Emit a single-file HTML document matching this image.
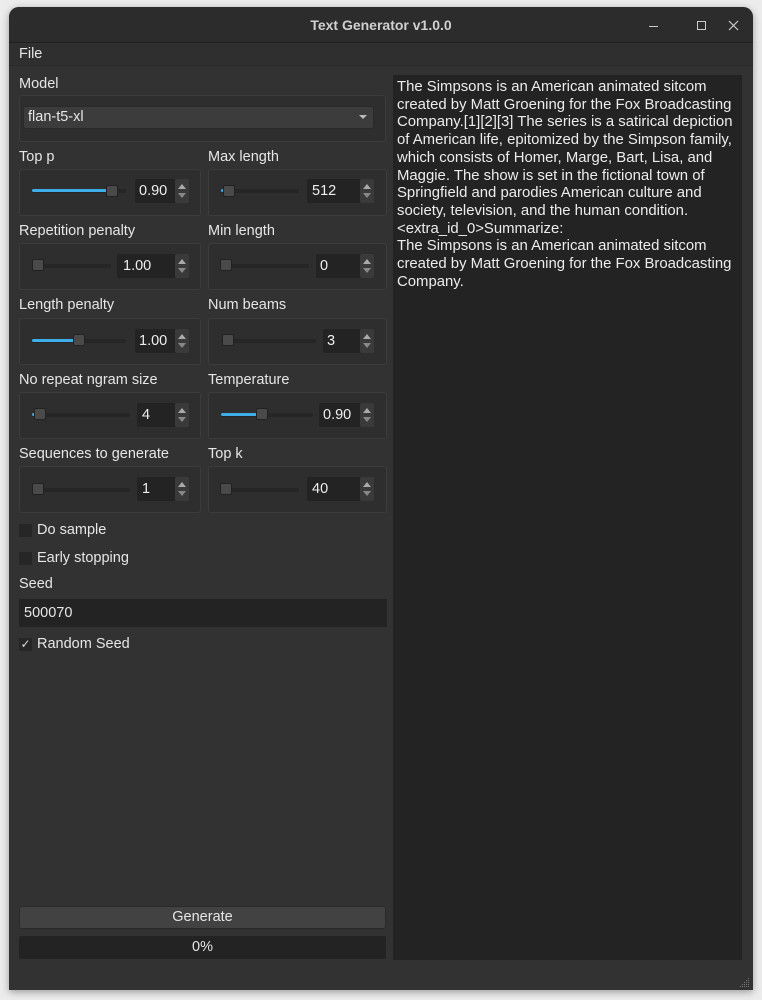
<!DOCTYPE html>
<html><head><meta charset="utf-8"><style>
*{box-sizing:border-box;margin:0;padding:0}
body{width:762px;height:1000px;background:#ececec;font-family:"Liberation Sans",sans-serif;font-size:14px;color:#e6e6e6;position:relative;overflow:hidden}
.win{position:absolute;left:9px;top:7px;width:744px;height:983px;background:#323232;border-radius:10px 10px 0 0;box-shadow:0 2px 8px rgba(0,0,0,.35);overflow:hidden}
.title{position:absolute;left:0;top:0;width:744px;height:36px;background:#2c2c2c;border-bottom:1px solid #1e1e1e;text-align:center;line-height:37px;font-weight:bold;color:#d0d0d0;font-size:14px}
.menu{position:absolute;left:0;top:37px;width:744px;height:22px;background:#2f2f2f;border-bottom:1px solid #2a2a2a}
.a{position:absolute}
.lbl{position:absolute;font-size:14.5px;color:#e6e6e6;white-space:nowrap}
.grp{position:absolute;border:1px solid #3c3c3c;border-radius:3px;background:#2e2e2e;height:47px}
.tr{position:absolute;height:4px;background:#262626;border-radius:2px}
.fill{position:absolute;height:3px;background:#3daee9;border-radius:2px}
.h{position:absolute;width:12px;height:12px;background:#4a4a4a;border:1px solid #222;border-radius:2px}
.spin{position:absolute;height:24px;background:#232323;border-radius:2px;line-height:24px;font-size:14.5px;color:#eee}
.spin .ar{position:absolute;right:0;top:0;width:14px;height:24px;background:#3a3a3a;border-radius:2px}
.spin .ar:before{content:"";position:absolute;left:3px;top:5px;border:4px solid transparent;border-bottom:5px solid #aaa;border-top:0}
.spin .ar:after{content:"";position:absolute;left:3px;top:14px;border:4px solid transparent;border-top:5px solid #888;border-bottom:0}
.cb{position:absolute;width:13px;height:13px;background:#262626}
.txt{position:absolute;left:384px;top:68px;width:349px;height:885px;background:#232323;padding:4px 4px;font-size:14.9px;line-height:17.7px;white-space:nowrap;color:#ececec;overflow:hidden}
</style></head><body>
<div class="win">
<div class="title">Text Generator v1.0.0</div>
<div class="a" style="left:640px;top:19px;width:9px;height:1px;background:#ccc"></div>
<div class="a" style="left:688px;top:14px;width:9px;height:9px;border:1.5px solid #ccc"></div>
<svg class="a" style="left:719px;top:13px" width="11" height="11"><path d="M1 1L10 10M10 1L1 10" stroke="#ccc" stroke-width="1.2"/></svg>
<div class="menu"></div>
<div class="lbl" style="left:10px;top:39px">File</div>

<div class="lbl" style="left:10px;top:69px">Model</div>
<div class="grp" style="left:10px;top:88px;width:367px;height:47px"></div>
<div class="a" style="left:14px;top:99px;width:351px;height:23px;background:#3c3c3c;border:1px solid #2a2a2a;border-radius:3px;line-height:21px;padding-left:4px;font-size:14.5px">flan-t5-xl</div>
<div class="a" style="left:350px;top:108px;border:4px solid transparent;border-top:4px solid #bbb"></div>
<div class="txt">The Simpsons is an American animated sitcom<br>created by Matt Groening for the Fox Broadcasting<br>Company.[1][2][3] The series is a satirical depiction<br>of American life, epitomized by the Simpson family,<br>which consists of Homer, Marge, Bart, Lisa, and<br>Maggie. The show is set in the fictional town of<br>Springfield and parodies American culture and<br>society, television, and the human condition.<br>&lt;extra_id_0&gt;Summarize:<br>The Simpsons is an American animated sitcom<br>created by Matt Groening for the Fox Broadcasting<br>Company.</div>
<svg class="a" style="left:731px;top:971px" width="10" height="10" fill="#777"><rect x="8" y="0" width="1" height="1"/><rect x="6" y="2" width="1" height="1"/><rect x="8" y="2" width="1" height="1"/><rect x="4" y="4" width="1" height="1"/><rect x="6" y="4" width="1" height="1"/><rect x="8" y="4" width="1" height="1"/><rect x="2" y="6" width="1" height="1"/><rect x="4" y="6" width="1" height="1"/><rect x="6" y="6" width="1" height="1"/><rect x="8" y="6" width="1" height="1"/><rect x="0" y="8" width="1" height="1"/><rect x="2" y="8" width="1" height="1"/><rect x="4" y="8" width="1" height="1"/><rect x="6" y="8" width="1" height="1"/><rect x="8" y="8" width="1" height="1"/></svg>
</div>

<div style="position:absolute;left:0;top:0">
<div class="lbl" style="left:19px;top:149px">Top p</div><div class="lbl" style="left:208px;top:149px">Max length</div>
<div class="grp" style="left:19px;top:169px;width:182px"></div><div class="grp" style="left:208px;top:169px;width:179px"></div>
<div class="tr" style="left:32px;top:189px;width:94px"></div><div class="fill" style="left:32px;top:189px;width:80px"></div><div class="h" style="left:106px;top:185px"></div>
<div class="spin" style="left:135px;top:179px;width:54px;padding-left:4px">0.90<div class="ar"></div></div>
<div class="tr" style="left:221px;top:189px;width:78px"></div><div class="fill" style="left:221px;top:189px;width:6px"></div><div class="h" style="left:223px;top:185px"></div>
<div class="spin" style="left:307px;top:179px;width:67px;padding-left:5px">512<div class="ar"></div></div>

<div class="lbl" style="left:19px;top:223px">Repetition penalty</div><div class="lbl" style="left:208px;top:223px">Min length</div>
<div class="grp" style="left:19px;top:243px;width:182px"></div><div class="grp" style="left:208px;top:243px;width:179px"></div>
<div class="tr" style="left:32px;top:264px;width:79px"></div><div class="h" style="left:32px;top:259px"></div>
<div class="spin" style="left:117px;top:254px;width:72px;padding-left:6px">1.00<div class="ar"></div></div>
<div class="tr" style="left:221px;top:264px;width:88px"></div><div class="h" style="left:220px;top:259px"></div>
<div class="spin" style="left:316px;top:254px;width:58px;padding-left:4px">0<div class="ar"></div></div>

<div class="lbl" style="left:19px;top:297px">Length penalty</div><div class="lbl" style="left:208px;top:297px">Num beams</div>
<div class="grp" style="left:19px;top:318px;width:182px"></div><div class="grp" style="left:208px;top:318px;width:179px"></div>
<div class="tr" style="left:32px;top:339px;width:94px"></div><div class="fill" style="left:32px;top:339px;width:47px"></div><div class="h" style="left:73px;top:334px"></div>
<div class="spin" style="left:135px;top:329px;width:54px;padding-left:4px">1.00<div class="ar"></div></div>
<div class="tr" style="left:221px;top:339px;width:95px"></div><div class="h" style="left:222px;top:334px"></div>
<div class="spin" style="left:323px;top:329px;width:51px;padding-left:4px">3<div class="ar"></div></div>

<div class="lbl" style="left:19px;top:372px">No repeat ngram size</div><div class="lbl" style="left:208px;top:372px">Temperature</div>
<div class="grp" style="left:19px;top:392px;width:182px"></div><div class="grp" style="left:208px;top:392px;width:179px"></div>
<div class="tr" style="left:32px;top:413px;width:98px"></div><div class="fill" style="left:32px;top:413px;width:4px"></div><div class="h" style="left:34px;top:408px"></div>
<div class="spin" style="left:137px;top:403px;width:52px;padding-left:5px">4<div class="ar"></div></div>
<div class="tr" style="left:221px;top:413px;width:92px"></div><div class="fill" style="left:221px;top:413px;width:40px"></div><div class="h" style="left:256px;top:408px"></div>
<div class="spin" style="left:319px;top:403px;width:55px;padding-left:4px">0.90<div class="ar"></div></div>

<div class="lbl" style="left:19px;top:446px">Sequences to generate</div><div class="lbl" style="left:208px;top:446px">Top k</div>
<div class="grp" style="left:19px;top:466px;width:182px"></div><div class="grp" style="left:208px;top:466px;width:179px"></div>
<div class="tr" style="left:32px;top:488px;width:98px"></div><div class="h" style="left:32px;top:483px"></div>
<div class="spin" style="left:137px;top:477px;width:52px;padding-left:5px">1<div class="ar"></div></div>
<div class="tr" style="left:221px;top:488px;width:78px"></div><div class="h" style="left:220px;top:483px"></div>
<div class="spin" style="left:307px;top:477px;width:67px;padding-left:5px">40<div class="ar"></div></div>

<div class="cb" style="left:19px;top:524px"></div><div class="lbl" style="left:37px;top:522px">Do sample</div>
<div class="cb" style="left:19px;top:552px"></div><div class="lbl" style="left:37px;top:550px">Early stopping</div>
<div class="lbl" style="left:19px;top:576px">Seed</div>
<div class="a" style="left:19px;top:599px;width:368px;height:28px;background:#232323;line-height:28px;padding-left:5px;font-size:14.5px">500070</div>
<div class="cb" style="left:19px;top:638px;color:#ddd;font-size:12px;line-height:13px;text-align:center">✓</div><div class="lbl" style="left:37px;top:636px">Random Seed</div>

<div class="a" style="left:19px;top:906px;width:367px;height:23px;background:#424242;border:1px solid #2a2a2a;border-radius:3px;text-align:center;line-height:21px;font-size:14.5px">Generate</div>
<div class="a" style="left:19px;top:936px;width:367px;height:23px;background:#232323;border-radius:2px;text-align:center;line-height:23px;font-size:14.5px">0%</div>
</div>
</body></html>
